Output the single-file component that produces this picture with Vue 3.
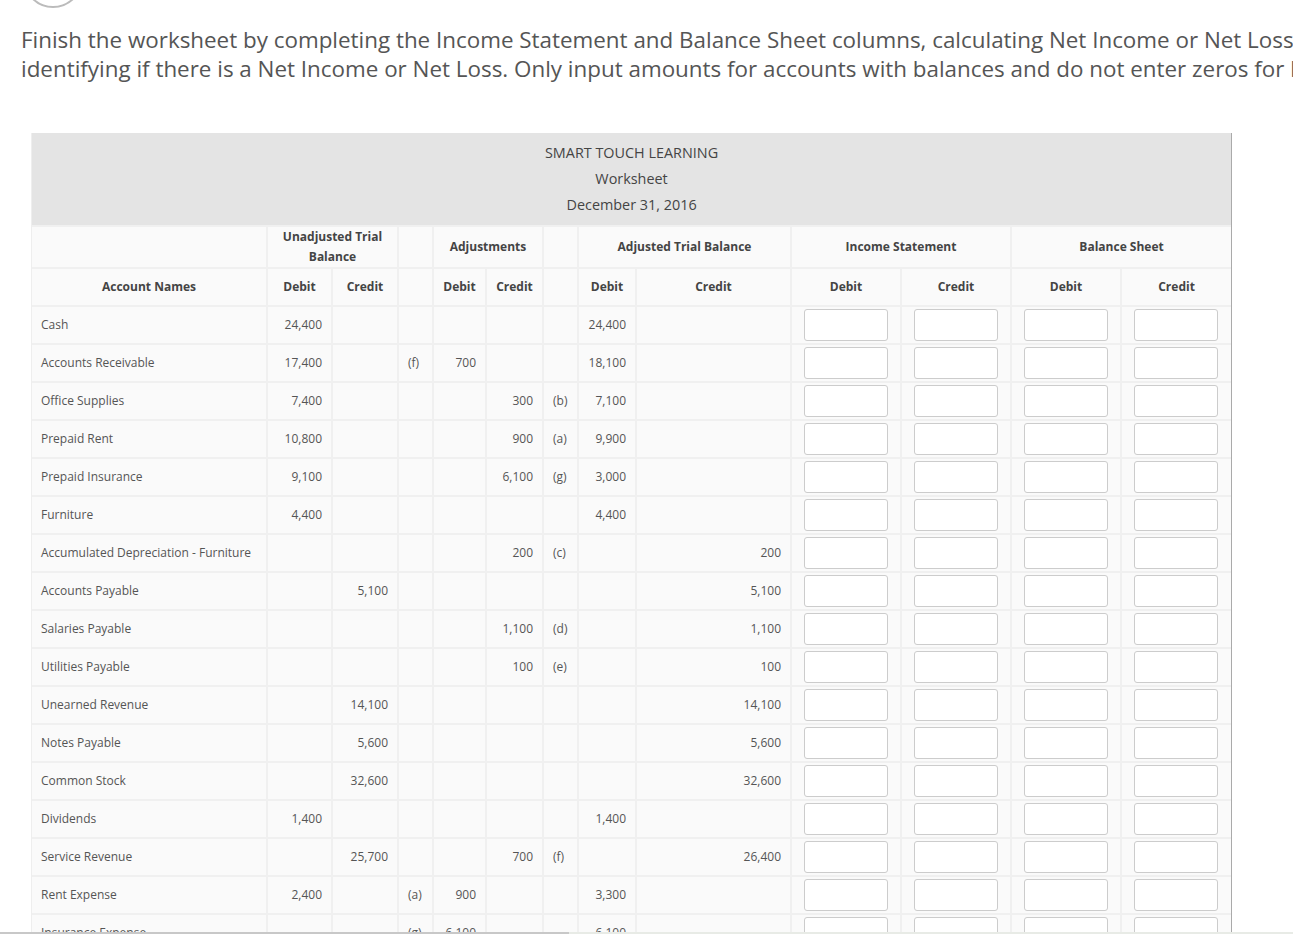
<template>
  <div class="page">
    <!-- 顶部被滚动裁掉的圆形 -->
    <div class="circle"></div>

    <div class="intro">
      <p>Finish the worksheet by completing the Income Statement and Balance Sheet columns, calculating Net Income or Net Loss, and then</p>
      <p>identifying if there is a Net Income or Net Loss. Only input amounts for accounts with balances and do not enter zeros for blank cells.</p>
    </div>

    <div class="sheet">
      <table>
        <colgroup>
          <col v-for="n in 13" :key="n" :class="'c' + n" />
        </colgroup>
        <thead>
          <tr class="title-row">
            <th colspan="13">
              <p>SMART TOUCH LEARNING</p>
              <p>Worksheet</p>
              <p>December 31, 2016</p>
            </th>
          </tr>
          <tr class="group-row">
            <th></th>
            <th colspan="2">Unadjusted Trial Balance</th>
            <th></th>
            <th colspan="2">Adjustments</th>
            <th></th>
            <th colspan="2">Adjusted Trial Balance</th>
            <th colspan="2">Income Statement</th>
            <th colspan="2">Balance Sheet</th>
          </tr>
          <tr class="label-row">
            <th>Account Names</th>
            <th>Debit</th>
            <th>Credit</th>
            <th></th>
            <th>Debit</th>
            <th>Credit</th>
            <th></th>
            <th>Debit</th>
            <th>Credit</th>
            <th>Debit</th>
            <th>Credit</th>
            <th>Debit</th>
            <th>Credit</th>
          </tr>
        </thead>
        <tbody>
          <tr v-for="row in rows" :key="row.name">
            <td class="name">{{ row.name }}</td>
            <td class="num">{{ row.utbDr }}</td>
            <td class="num">{{ row.utbCr }}</td>
            <td class="ref">{{ row.refDr }}</td>
            <td class="num">{{ row.adjDr }}</td>
            <td class="num">{{ row.adjCr }}</td>
            <td class="ref">{{ row.refCr }}</td>
            <td class="num">{{ row.atbDr }}</td>
            <td class="num">{{ row.atbCr }}</td>
            <td v-for="n in 4" :key="n" class="field"><input type="text" /></td>
          </tr>
        </tbody>
      </table>
    </div>

    <!-- 底部横向滚动条 -->
    <div class="scrollbar"><div class="thumb"></div></div>
  </div>
</template>

<script setup>
const rows = [
  { name: 'Cash', utbDr: '24,400', atbDr: '24,400' },
  { name: 'Accounts Receivable', utbDr: '17,400', refDr: '(f)', adjDr: '700', atbDr: '18,100' },
  { name: 'Office Supplies', utbDr: '7,400', adjCr: '300', refCr: '(b)', atbDr: '7,100' },
  { name: 'Prepaid Rent', utbDr: '10,800', adjCr: '900', refCr: '(a)', atbDr: '9,900' },
  { name: 'Prepaid Insurance', utbDr: '9,100', adjCr: '6,100', refCr: '(g)', atbDr: '3,000' },
  { name: 'Furniture', utbDr: '4,400', atbDr: '4,400' },
  { name: 'Accumulated Depreciation - Furniture', adjCr: '200', refCr: '(c)', atbCr: '200' },
  { name: 'Accounts Payable', utbCr: '5,100', atbCr: '5,100' },
  { name: 'Salaries Payable', adjCr: '1,100', refCr: '(d)', atbCr: '1,100' },
  { name: 'Utilities Payable', adjCr: '100', refCr: '(e)', atbCr: '100' },
  { name: 'Unearned Revenue', utbCr: '14,100', atbCr: '14,100' },
  { name: 'Notes Payable', utbCr: '5,600', atbCr: '5,600' },
  { name: 'Common Stock', utbCr: '32,600', atbCr: '32,600' },
  { name: 'Dividends', utbDr: '1,400', atbDr: '1,400' },
  { name: 'Service Revenue', utbCr: '25,700', adjCr: '700', refCr: '(f)', atbCr: '26,400' },
  { name: 'Rent Expense', utbDr: '2,400', refDr: '(a)', adjDr: '900', atbDr: '3,300' },
  { name: 'Insurance Expense', refDr: '(g)', adjDr: '6,100', atbDr: '6,100' }
]
</script>

<style>
html, body {
  overflow: hidden;
}
</style>

<style scoped>
.page {
  height: 100vh;
  overflow: hidden;
  background: #fff;
  color: #555;
  font-family: "Open Sans", "Noto Sans", sans-serif;
}

.circle {
  width: 60px;
  height: 60px;
  margin: -52px 0 0 23px;
  border: 2px solid #bbb;
  border-radius: 50%;
  box-sizing: border-box;
}

.intro {
  margin: 17px 0 0 21px;
  font-size: 22.4px;
  line-height: 29px;
  white-space: nowrap;
}
.intro p {
  margin: 0;
}

.sheet {
  width: fit-content;
  margin: 50px 0 0 31px;
  border-left: 1px solid #eee;
  border-right: 1px solid #aaa;
}

table {
  table-layout: fixed;
  width: 1199px;
  border-collapse: collapse;
  font-size: 12px;
}
.c1 { width: 235px; }
.c2 { width: 65px; }
.c3 { width: 66px; }
.c4 { width: 35px; }
.c5 { width: 53px; }
.c6 { width: 57px; }
.c7 { width: 35px; }
.c8 { width: 58px; }
.c9 { width: 155px; }
.c10, .c11, .c12, .c13 { width: 110px; }

th, td {
  border: 2px solid #f0f0f0;
  background: #fafafa;
  padding: 0;
}
tr > :first-child {
  border-left: 0;
}
tr > :last-child {
  border-right: 0;
}

.title-row th {
  height: 88px;
  padding-bottom: 2px;
  background: #e4e4e4;
  border-color: #e4e4e4;
  border-left: 0;
  border-right: 0;
  border-bottom-color: #f0f0f0;
  font-size: 14.4px;
  font-weight: 400;
  color: #444;
}
.title-row p {
  margin: 0;
  line-height: 26px;
}

.group-row th {
  height: 40px;
  padding: 0 9px;
  line-height: 20px;
  color: #444;
  font-weight: 700;
}
.label-row th {
  height: 34px;
  padding-bottom: 2px;
  color: #444;
  font-weight: 700;
}

tbody tr {
  height: 38px;
}
.name {
  padding: 0 0 2px 9px;
}
.num {
  padding: 0 9px 2px 0;
  text-align: right;
}
.ref {
  padding: 0 0 2px 9px;
}
.field {
  padding-right: 1px;
}
.field input {
  display: block;
  width: 84px;
  height: 32px;
  margin: 0 auto;
  padding: 0;
  background: #fff;
  border: 1px solid #ccc;
  border-radius: 3px;
  box-sizing: border-box;
}
tr > .field:not(:last-child) {
  padding-right: 0;
}

.scrollbar {
  position: fixed;
  left: 0;
  right: 0;
  bottom: 0;
  height: 2px;
  background: #e8ebe6;
}
.thumb {
  width: 569px;
  height: 100%;
  background: #c8c8c8;
}
</style>
